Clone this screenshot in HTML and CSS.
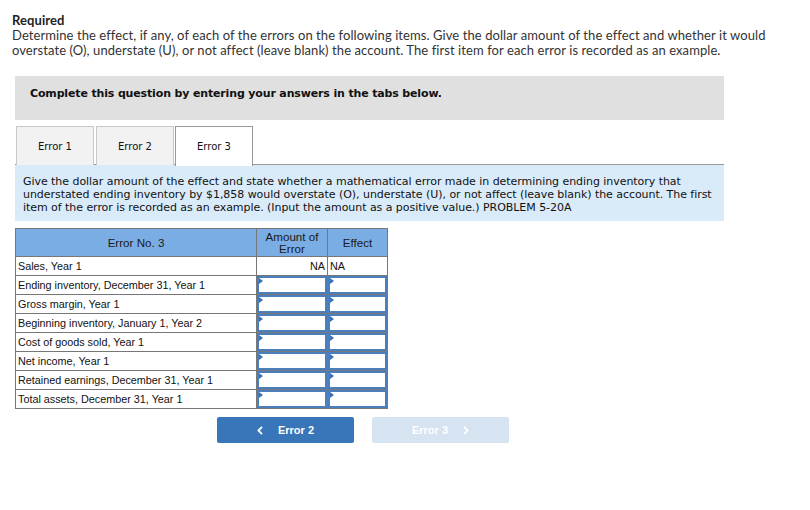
FILE: index.html
```html
<!DOCTYPE html>
<html>
<head>
<meta charset="utf-8">
<link rel="stylesheet" href="styles.css">
</head>
<body>
<div class="page">
  <div class="intro">
    <div class="req">Required</div>
    <div class="desc">Determine the effect, if any, of each of the errors on the following items. Give the dollar amount of the effect and whether it would overstate (O), understate (U), or not affect (leave blank) the account. The first item for each error is recorded as an example.</div>
  </div>
  <div class="banner">Complete this question by entering your answers in the tabs below.</div>
  <div class="tabs">
    <div class="tab">Error 1</div>
    <div class="tab">Error 2</div>
    <div class="tab active">Error 3</div>
  </div>
  <div class="instr">Give the dollar amount of the effect and state whether a mathematical error made in determining ending inventory that understated ending inventory by $1,858 would overstate (O), understate (U), or not affect (leave blank) the account. The first item of the error is recorded as an example. (Input the amount as a positive value.) PROBLEM 5-20A</div>
  <table class="grid">
    <thead>
      <tr><th class="c1">Error No. 3</th><th class="c2">Amount of<br>Error</th><th class="c3">Effect</th></tr>
    </thead>
    <tbody>
      <tr><td>Sales, Year 1</td><td class="na r">NA</td><td class="na">NA</td></tr>
      <tr><td>Ending inventory, December 31, Year 1</td><td class="in"><span class="box"></span></td><td class="in"><span class="box"></span></td></tr>
      <tr><td>Gross margin, Year 1</td><td class="in"><span class="box"></span></td><td class="in"><span class="box"></span></td></tr>
      <tr><td>Beginning inventory, January 1, Year 2</td><td class="in"><span class="box"></span></td><td class="in"><span class="box"></span></td></tr>
      <tr><td>Cost of goods sold, Year 1</td><td class="in"><span class="box"></span></td><td class="in"><span class="box"></span></td></tr>
      <tr><td>Net income, Year 1</td><td class="in"><span class="box"></span></td><td class="in"><span class="box"></span></td></tr>
      <tr><td>Retained earnings, December 31, Year 1</td><td class="in"><span class="box"></span></td><td class="in"><span class="box"></span></td></tr>
      <tr><td>Total assets, December 31, Year 1</td><td class="in"><span class="box"></span></td><td class="in"><span class="box"></span></td></tr>
    </tbody>
  </table>
  <div class="nav">
    <div class="btn prev"><svg class="chev" width="6" height="9" viewBox="0 0 6 9"><polyline points="5,0.8 1.4,4.5 5,8.2" fill="none" stroke="#fff" stroke-width="1.8"/></svg>Error 2</div>
    <div class="btn next">Error 3<svg class="chev" width="6" height="9" viewBox="0 0 6 9"><polyline points="1,0.8 4.6,4.5 1,8.2" fill="none" stroke="#fff" stroke-width="1.8"/></svg></div>
  </div>
</div>
</body>
</html>
```
FILE: styles.css
```css
* { box-sizing: border-box; }
body { margin: 0; background: #fff; }
.page { padding: 13px 0 0 0; width: 810px; }
.intro { padding-left: 12px; font-family: Lato, "Liberation Sans", sans-serif; font-size: 13px; line-height: 15px; color: #333; letter-spacing: 0.08px; }
.req { font-weight: bold; color: #222; }
.desc { width: 785px; }
.banner { margin: 18px 0 0 15px; width: 709px; height: 44px; background: #e0e0e0; font-family: Verdana, "DejaVu Sans", sans-serif; font-weight: bold; font-size: 11px; padding: 11px 0 0 15px; color: #111; letter-spacing: -0.15px; }
.tabs { display: flex; margin: 6px 0 0 15px; width: 709px; height: 39px; border-bottom: 1px solid #999; gap: 1px; }
.tab { width: 78px; height: 39px; background: #f2f2f2; border: 1px solid #c8c8c8; border-bottom: none; font-family: Verdana, "DejaVu Sans", sans-serif; font-size: 10px; display: flex; align-items: center; justify-content: center; color: #111; margin-left: 1px; }
.tab.active { background: #fff; border-color: #999; height: 40px; margin-left: 0; }
.instr { margin-left: 15px; width: 709px; height: 56px; background: #d9ebf9; font-family: Verdana, "DejaVu Sans", sans-serif; font-size: 11px; line-height: 13px; padding: 10px 8px 0 8px; color: #111; letter-spacing: -0.05px; }
.grid { margin: 7px 0 0 15px; border-collapse: collapse; font-family: Arial, "Liberation Sans", sans-serif; font-size: 10.8px; color: #111; }
.grid th { background: #7aade3; border: 1px solid #777; font-weight: normal; font-size: 11.6px; height: 28px; line-height: 12px; padding: 0; color: #1a1a1a; }
.grid .c1 { width: 241px; }
.grid .c2 { width: 71px; }
.grid .c3 { width: 60px; }
.grid td { border: 1px solid #777; height: 19px; padding: 0 2px; }
.grid td.na { padding: 0 2px; }
.grid td.r { text-align: right; }
.grid td.in { padding: 0; position: relative; }
.box { display: block; height: 18px; border: 2px solid #4a7ebd; position: relative; }
.box::before { content: ""; position: absolute; left: 0; top: 0; border-left: 4px solid #3a70b8; border-top: 3px solid transparent; border-bottom: 3px solid transparent; }
.nav { display: flex; gap: 18px; margin: 8px 0 0 217px; }
.btn { width: 137px; height: 26px; border-radius: 2px; display: flex; align-items: center; justify-content: center; font-family: Arial, "Liberation Sans", sans-serif; font-weight: bold; font-size: 11px; color: #fff; }
.btn.prev { background: #3875b9; }
.btn.next { background: #d6e3f1; }
.chev { display: block; }
.prev .chev { margin-right: 15px; }
.next .chev { margin-left: 15px; }
```
